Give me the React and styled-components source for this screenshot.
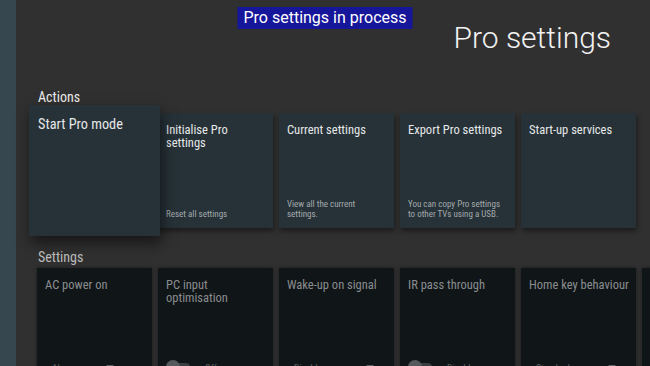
import styled, { createGlobalStyle } from "styled-components";

const GlobalStyle = createGlobalStyle`
  html, body {
    margin: 0;
    padding: 0;
    width: 650px;
    height: 366px;
    overflow: hidden;
    background: #303030;
  }
  * { box-sizing: border-box; }
`;

const actions = [
  { id: "start", title: "Start Pro mode", text: "" },
  { id: "init", title: "Initialise Pro settings", text: "Reset all settings" },
  { id: "current", title: "Current settings", text: "View all the current settings." },
  { id: "export", title: "Export Pro settings", text: "You can copy Pro settings to other TVs using a USB." },
  { id: "startup", title: "Start-up services", text: "" },
];

const settings = [
  { id: "ac", title: "AC power on", kind: "select", value: "Always on", end: "34px" },
  { id: "pc", title: "PC input optimisation", kind: "toggle", value: "Off" },
  { id: "wake", title: "Wake-up on signal", kind: "select", value: "Disable", end: "16px" },
  { id: "ir", title: "IR pass through", kind: "toggle", value: "Disable" },
  { id: "home", title: "Home key behaviour", kind: "select", value: "Standard menu", end: "16px" },
  { id: "more", title: "", kind: "none", value: "" },
];

export default function App() {
  return (
    <Screen>
      <GlobalStyle />
      <SideStrip />
      <Main>
        <Toast>Pro settings in process</Toast>
        <Header>
          <Title>Pro settings</Title>
        </Header>

        <SectionLabel $tone="#ececec" $gap="33px">Actions</SectionLabel>
        <CardRow $gap="8px">
          {actions.map((a, i) => (
            <ActionCard key={a.id} $focused={i === 0}>
              <CardTitle>{a.title}</CardTitle>
              {a.text && <CardText>{a.text}</CardText>}
            </ActionCard>
          ))}
        </CardRow>

        <SectionLabel $tone="#bdbdbd" $gap="21px">Settings</SectionLabel>
        <CardRow $gap="3px">
          {settings.map((s) => (
            <SettingCard key={s.id}>
              <SettingTitle>{s.title}</SettingTitle>
              {s.kind === "select" && (
                <Footer $pad="7px" $end={s.end}>
                  <FooterText>{s.value}</FooterText>
                  <Caret />
                </Footer>
              )}
              {s.kind === "toggle" && (
                <Footer $pad="0" $end="16px">
                  <Toggle>
                    <Knob />
                  </Toggle>
                  <FooterText $indent="15px">{s.value}</FooterText>
                </Footer>
              )}
            </SettingCard>
          ))}
        </CardRow>
      </Main>
    </Screen>
  );
}

const Screen = styled.div`
  position: relative;
  display: flex;
  width: 650px;
  height: 366px;
  overflow: hidden;
  background: #303030;
  font-family: "Roboto Condensed", Roboto, "Liberation Sans", sans-serif;
`;

const SideStrip = styled.div`
  width: 16px;
  flex-shrink: 0;
  background: #37474f;
`;

const Main = styled.div`
  flex: 1;
  min-width: 0;
  display: flex;
  flex-direction: column;
  padding-left: 21px;
`;

const Toast = styled.div`
  position: absolute;
  top: 7px;
  left: 50%;
  transform: translateX(-50%);
  background: #16169a;
  color: #ffffff;
  font-family: Roboto, sans-serif;
  font-size: 16px;
  line-height: 22px;
  padding: 0 6px;
  white-space: nowrap;
`;

const Header = styled.div`
  display: flex;
  justify-content: flex-end;
  padding: 20px 39px 0 0;
`;

const Title = styled.h1`
  margin: 0;
  font-family: Roboto, sans-serif;
  font-weight: 300;
  font-size: 30px;
  line-height: 36px;
  color: #f2f2f2;
`;

const SectionLabel = styled.div`
  margin-top: ${(p) => p.$gap};
  padding-left: 1px;
  font-size: 14px;
  line-height: 16px;
  color: ${(p) => p.$tone};
`;

const CardRow = styled.div`
  display: flex;
  gap: 6px;
  margin-top: ${(p) => p.$gap};
`;

const ActionCard = styled.div`
  position: relative;
  z-index: ${(p) => (p.$focused ? 2 : 1)};
  flex-shrink: 0;
  width: 115px;
  height: 115px;
  display: flex;
  flex-direction: column;
  padding: 10px 8px 9px;
  background: #263238;
  box-shadow: ${(p) =>
    p.$focused
      ? "2px 6px 12px rgba(0, 0, 0, 0.55)"
      : "1px 3px 5px rgba(0, 0, 0, 0.45)"};
  transform: ${(p) => (p.$focused ? "scale(1.14)" : "none")};
`;

const CardTitle = styled.div`
  font-size: 12.5px;
  line-height: 13px;
  color: #e6e8e9;
`;

const CardText = styled.div`
  margin-top: auto;
  font-size: 9px;
  line-height: 10px;
  color: #a4a9ac;
`;

const SettingCard = styled.div`
  flex-shrink: 0;
  width: 115px;
  height: 115px;
  display: flex;
  flex-direction: column;
  padding: 10px 4px 9px 8px;
  background: #101518;
  box-shadow: 0 0 4px rgba(0, 0, 0, 0.45);
`;

const SettingTitle = styled.div`
  font-size: 12.5px;
  line-height: 13px;
  color: #8a8d8f;
`;

const Footer = styled.div`
  margin-top: auto;
  height: 14px;
  display: flex;
  align-items: center;
  padding-left: ${(p) => p.$pad};
  padding-right: ${(p) => p.$end};
`;

const FooterText = styled.span`
  font-size: 9.5px;
  color: #5f6365;
  margin-left: ${(p) => p.$indent || "0"};
  flex: ${(p) => (p.$indent ? "none" : "1")};
`;

const Caret = styled.span`
  width: 0;
  height: 0;
  border-left: 4px solid transparent;
  border-right: 4px solid transparent;
  border-top: 4px solid #5f6365;
`;

const Toggle = styled.span`
  position: relative;
  width: 22px;
  height: 8px;
  margin-left: 2px;
  border-radius: 4px;
  background: #3a3e40;
`;

const Knob = styled.span`
  position: absolute;
  left: -2px;
  top: -3px;
  width: 14px;
  height: 14px;
  border-radius: 50%;
  background: #55595b;
`;
